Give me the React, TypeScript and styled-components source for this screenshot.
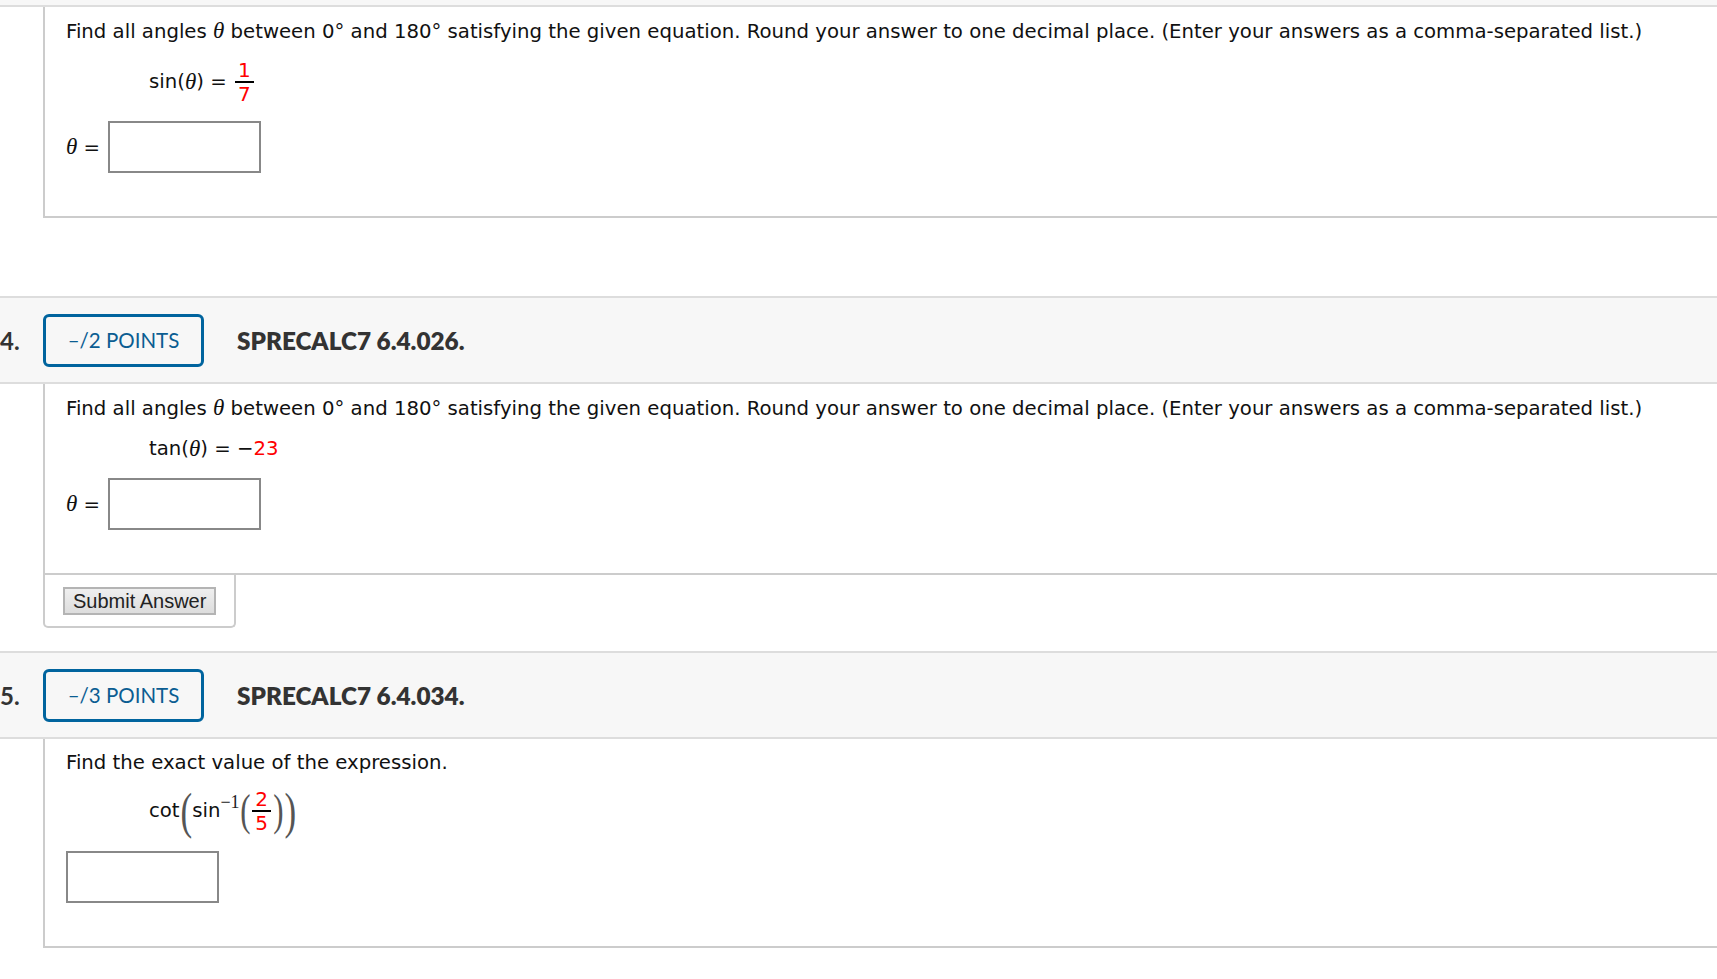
import React from "react";
import styled, { createGlobalStyle } from "styled-components";

const GlobalStyle = createGlobalStyle`
  html, body {
    margin: 0;
    padding: 0;
    background: #ffffff;
    overflow: hidden;
  }
  * {
    box-sizing: border-box;
  }
`;

const Theta = () => <Italic>θ</Italic>;

const App: React.FC = () => {
  return (
    <Page>
      <GlobalStyle />
      <HeaderStub />

      <QuestionBody>
        <Prompt>
          Find all angles <Theta /> between 0° and 180° satisfying the given equation. Round your
          answer to one decimal place. (Enter your answers as a comma-separated list.)
        </Prompt>
        <EquationRow>
          sin(<Theta />) =&nbsp;
          <Frac>
            <Num>1</Num>
            <Den>7</Den>
          </Frac>
        </EquationRow>
        <AnswerRow>
          <Label>
            <Theta /> =
          </Label>
          <AnswerInput type="text" />
        </AnswerRow>
      </QuestionBody>

      <QuestionHeader $gap={78}>
        <Number>4.</Number>
        <PointsBadge>–/2 POINTS</PointsBadge>
        <Title>SPRECALC7 6.4.026.</Title>
      </QuestionHeader>

      <QuestionBody>
        <Prompt>
          Find all angles <Theta /> between 0° and 180° satisfying the given equation. Round your
          answer to one decimal place. (Enter your answers as a comma-separated list.)
        </Prompt>
        <EquationRow>
          tan(<Theta />) = −<Red>23</Red>
        </EquationRow>
        <AnswerRow>
          <Label>
            <Theta /> =
          </Label>
          <AnswerInput type="text" />
        </AnswerRow>
      </QuestionBody>
      <SubmitBar>
        <SubmitButton type="button">Submit Answer</SubmitButton>
      </SubmitBar>

      <QuestionHeader $gap={23}>
        <Number>5.</Number>
        <PointsBadge>–/3 POINTS</PointsBadge>
        <Title>SPRECALC7 6.4.034.</Title>
      </QuestionHeader>

      <QuestionBody>
        <Prompt>Find the exact value of the expression.</Prompt>
        <EquationRow $gap={14}>
          cot
          <BigParen $size={50}>(</BigParen>
          sin
          <Sup>−1</Sup>
          <BigParen $size={44}>(</BigParen>
          <Frac>
            <Num>2</Num>
            <Den>5</Den>
          </Frac>
          <BigParen $size={44}>)</BigParen>
          <BigParen $size={50}>)</BigParen>
        </EquationRow>
        <AnswerRow $gap={18}>
          <AnswerInput type="text" />
        </AnswerRow>
      </QuestionBody>
    </Page>
  );
};

const Page = styled.div`
  width: 1717px;
  min-height: 979px;
  background: #ffffff;
  font-family: "DejaVu Sans", Verdana, sans-serif;
  color: #111;
`;

const HeaderStub = styled.div`
  height: 7px;
  background: #f7f7f7;
  border-bottom: 2px solid #dddddd;
`;

const QuestionHeader = styled.div<{ $gap: number }>`
  display: flex;
  align-items: center;
  height: 88px;
  margin-top: ${(p) => p.$gap}px;
  background: #f7f7f7;
  border-top: 2px solid #dddddd;
  border-bottom: 2px solid #dddddd;
`;

const Number = styled.div`
  width: 43px;
  font-family: Lato, "Open Sans", sans-serif;
  font-weight: 700;
  font-size: 24px;
  color: #333333;
`;

const PointsBadge = styled.div`
  display: flex;
  align-items: center;
  justify-content: center;
  width: 161px;
  height: 53px;
  border: 3px solid #00649e;
  border-radius: 6px;
  font-family: Lato, "Open Sans", sans-serif;
  font-size: 20.5px;
  color: #0b5d92;
`;

const Title = styled.div`
  margin-left: 33px;
  font-family: Lato, "Open Sans", sans-serif;
  font-weight: 800;
  font-size: 24.3px;
  color: #333333;
`;

const QuestionBody = styled.div`
  margin-left: 43px;
  padding: 12px 0 43px 21px;
  border-left: 2px solid #cccccc;
  border-bottom: 2px solid #cccccc;
`;

const Prompt = styled.p`
  margin: 0;
  font-size: 19.7px;
  line-height: 24px;
  white-space: nowrap;
`;

const Italic = styled.span`
  font-family: "Liberation Serif", "DejaVu Serif", serif;
  font-style: italic;
  font-size: 23px;
`;

const EquationRow = styled.div<{ $gap?: number }>`
  display: flex;
  align-items: center;
  min-height: 24px;
  margin-top: ${(p) => p.$gap ?? 16}px;
  padding-left: 83px;
  font-size: 19.7px;
  line-height: 24px;
  white-space: pre;
`;

const Frac = styled.span`
  display: inline-flex;
  flex-direction: column;
  align-items: center;
  padding: 0 2px;
  font-size: 20px;
  line-height: 20px;
  color: #ff0000;
`;

const Num = styled.span`
  padding: 0 3px 1px;
  border-bottom: 2px solid #000;
`;

const Den = styled.span`
  padding: 1px 3px 0;
`;

const Red = styled.span`
  color: #ff0000;
`;

const Sup = styled.span`
  position: relative;
  top: -9px;
  font-family: "Liberation Serif", "DejaVu Serif", serif;
  font-size: 18px;
  line-height: 16px;
  color: #222;
`;

const BigParen = styled.span<{ $size: number }>`
  display: inline-block;
  font-family: "Liberation Serif", serif;
  font-weight: 400;
  font-size: ${(p) => p.$size}px;
  line-height: 40px;
  color: #555;
  transform: scaleX(0.7);
  margin: 0 -2px;
`;

const AnswerRow = styled.div<{ $gap?: number }>`
  display: flex;
  align-items: center;
  gap: 8px;
  margin-top: ${(p) => p.$gap ?? 17}px;
`;

const Label = styled.span`
  font-size: 19.7px;
  line-height: 24px;
  white-space: nowrap;
`;

const AnswerInput = styled.input`
  width: 153px;
  height: 52px;
  margin: 0;
  border: 2px solid #888888;
  background: #ffffff;
  outline: none;
`;

const SubmitBar = styled.div`
  display: flex;
  width: 193px;
  margin-left: 43px;
  padding: 12px 0 11px 18px;
  border: 2px solid #cccccc;
  border-top: none;
  border-radius: 0 0 5px 5px;
`;

const SubmitButton = styled.button`
  height: 28px;
  padding: 0 8px;
  font-family: "Liberation Sans", Arial, sans-serif;
  font-size: 20px;
  color: #222;
  background: linear-gradient(#efefef, #dddddd);
  border: 2px solid #b4b4b4;
  border-radius: 0;
`;

export default App;
